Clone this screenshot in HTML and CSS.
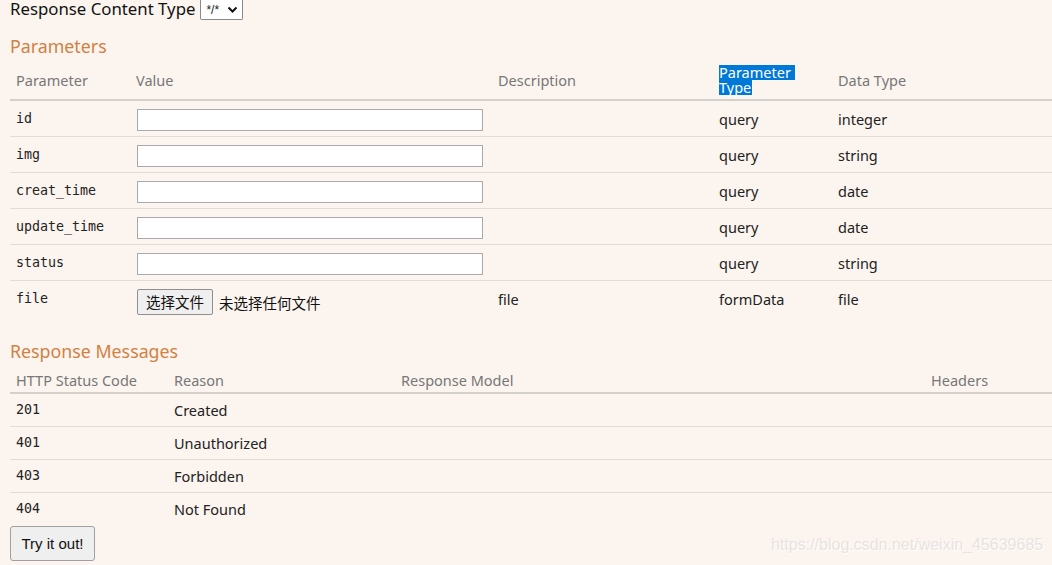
FILE: index.html
```html
<!DOCTYPE html>
<html>
<head>
<meta charset="utf-8">
<link rel="stylesheet" href="styles.css">
</head>
<body>
<div class="content">
  <div class="rct">
    <span class="rct-label">Response Content Type</span>
    <span class="sel">*/* <svg width="11" height="8" viewBox="0 0 11 8"><path d="M1.5 1.5 L5.5 5.5 L9.5 1.5" fill="none" stroke="#111" stroke-width="2"/></svg></span>
  </div>
  <h4 class="sec">Parameters</h4>
  <table class="params">
    <colgroup>
      <col class="c1"><col class="c2"><col class="c3"><col class="c4"><col class="c5">
    </colgroup>
    <thead>
      <tr>
        <th>Parameter</th>
        <th>Value</th>
        <th>Description</th>
        <th class="ptype"><span class="hl">Parameter Type</span></th>
        <th>Data Type</th>
      </tr>
    </thead>
    <tbody>
      <tr><td class="code">id</td><td><input class="txt" type="text"></td><td></td><td>query</td><td>integer</td></tr>
      <tr><td class="code">img</td><td><input class="txt" type="text"></td><td></td><td>query</td><td>string</td></tr>
      <tr><td class="code">creat_time</td><td><input class="txt" type="text"></td><td></td><td>query</td><td>date</td></tr>
      <tr><td class="code">update_time</td><td><input class="txt" type="text"></td><td></td><td>query</td><td>date</td></tr>
      <tr><td class="code">status</td><td><input class="txt" type="text"></td><td></td><td>query</td><td>string</td></tr>
      <tr class="last"><td class="code">file</td><td><span class="filepick"><span class="filebtn">选择文件</span><span class="filetxt">未选择任何文件</span></span></td><td>file</td><td>formData</td><td>file</td></tr>
    </tbody>
  </table>
  <h4 class="sec sec2">Response Messages</h4>
  <table class="resp">
    <colgroup>
      <col class="r1"><col class="r2"><col class="r3"><col class="r4">
    </colgroup>
    <thead>
      <tr><th>HTTP Status Code</th><th>Reason</th><th>Response Model</th><th>Headers</th></tr>
    </thead>
    <tbody>
      <tr><td class="code">201</td><td>Created</td><td></td><td></td></tr>
      <tr><td class="code">401</td><td>Unauthorized</td><td></td><td></td></tr>
      <tr><td class="code">403</td><td>Forbidden</td><td></td><td></td></tr>
      <tr class="last"><td class="code">404</td><td>Not Found</td><td></td><td></td></tr>
    </tbody>
  </table>
  <div class="actions"><button class="try">Try it out!</button></div>
</div>
<div class="watermark">https://blog.csdn.net/weixin_45639685</div>
</body>
</html>
```

FILE: styles.css
```css
html, body {
  margin: 0;
  padding: 0;
  background: #fcf5ef;
  overflow: hidden;
}
body {
  width: 1052px;
  height: 565px;
  font-family: "Noto Sans", "Open Sans", "Noto Sans CJK SC", sans-serif;
  color: #333;
  position: relative;
}
.content {
  padding: 0 0 0 10px;
}
.rct {
  height: 22px;
  display: flex;
  align-items: flex-start;
  gap: 5px;
}
.rct-label {
  font-size: 16.8px;
  line-height: 18px;
  color: #111;
}
.sel {
  box-sizing: border-box;
  height: 20px;
  width: 43px;
  margin-top: 0;
  border: 1px solid #8a8a8a;
  border-top: none;
  border-radius: 0 0 2px 2px;
  background: #fff;
  font-family: "Liberation Sans", Arial, sans-serif;
  font-size: 12px;
  color: #222;
  display: flex;
  align-items: center;
  justify-content: space-between;
  padding: 0 4px 0 5px;
}
.sec {
  margin: 12px 0 0 0;
  height: 26px;
  line-height: 24px;
  font-size: 17.8px;
  font-weight: normal;
  color: #d38042;
}
.sec2 {
  margin-top: 22px;
}
table {
  border-collapse: collapse;
  table-layout: fixed;
  width: 1042px;
}
.params .c1 { width: 120px; }
.params .c2 { width: 362px; }
.params .c3 { width: 221px; }
.params .c4 { width: 119px; }
.params .c5 { width: 220px; }
th {
  text-align: left;
  font-weight: normal;
  color: #777;
  font-size: 14.5px;
  padding: 0 6px;
  border-bottom: 2px solid #d3cfcb;
  vertical-align: middle;
}
.params th {
  height: 39px;
}
.params td {
  height: 36px;
  box-sizing: border-box;
  padding: 8px 6px 0 6px;
  vertical-align: top;
  border-bottom: 1px solid #e0dcd8;
  font-size: 14.5px;
  line-height: 20px;
  color: #222;
}
.params tr.last td {
  border-bottom: none;
  height: 37px;
}
.params td.code, .resp td.code {
  font-family: "DejaVu Sans Mono", "Liberation Mono", monospace;
  font-size: 13.3px;
  color: #222;
}
.ptype {
  line-height: 15px;
}
.hl {
  color: #fff;
}
.ptype .hl {
  display: inline-block;
  width: 76px;
  padding: 0;
  background: linear-gradient(#0078d7, #0078d7) 0 0 / 76px 15px no-repeat, linear-gradient(#0078d7, #0078d7) 0 15px / 33px 15px no-repeat;
}
.txt {
  display: block;
  box-sizing: border-box;
  width: 346px;
  height: 22px;
  margin: 0 0 0 1px;
  border: 1px solid #a9a9a9;
  background: #fff;
  padding: 0;
}
.filepick {
  display: flex;
  align-items: center;
  gap: 6px;
  margin-left: 1px;
  margin-top: 0;
}
.filebtn {
  box-sizing: border-box;
  height: 26px;
  padding: 0 8px;
  border: 1px solid #8f8f8f;
  border-radius: 2px;
  background: #efefef;
  font-family: "Noto Sans CJK SC", sans-serif;
  font-size: 14.5px;
  line-height: 24px;
  color: #111;
}
.filetxt {
  font-family: "Noto Sans CJK SC", sans-serif;
  font-size: 14.5px;
  color: #111;
  margin-top: 3px;
}
.resp .r1 { width: 158px; }
.resp .r2 { width: 227px; }
.resp .r3 { width: 530px; }
.resp .r4 { width: 127px; }
.resp th {
  height: 25px;
  line-height: 20px;
  padding-top: 2px;
}
.resp td {
  height: 33px;
  box-sizing: border-box;
  padding: 0 6px;
  vertical-align: middle;
  border-bottom: 1px solid #e0dcd8;
  font-size: 14.5px;
  color: #222;
}
.resp tr.last td {
  border-bottom: none;
}
.actions {
  padding-top: 1px;
}
.try {
  box-sizing: border-box;
  width: 85px;
  height: 35px;
  border: 1px solid #a0a0a0;
  border-radius: 3px;
  background: #efefef;
  font-family: "Liberation Sans", Arial, sans-serif;
  font-size: 15px;
  color: #111;
  padding: 0;
}
.watermark {
  position: absolute;
  left: 771px;
  top: 536px;
  font-family: "Liberation Sans", Arial, sans-serif;
  font-size: 16px;
  color: #e8e3de;
  text-shadow: 1px 1px 0 #ffffff;
}
```
